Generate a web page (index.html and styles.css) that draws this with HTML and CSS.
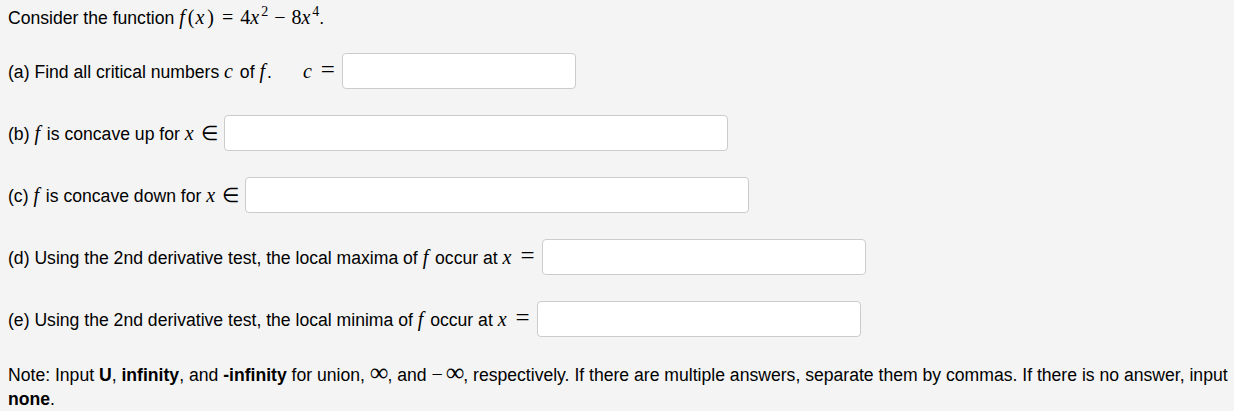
FILE: index.html
```html
<!DOCTYPE html>
<html>
<head>
<meta charset="utf-8">
<link rel="stylesheet" href="styles.css">
</head>
<body>
<div class="page">
  <p class="intro">Consider the function <span class="m"><i>f</i><span class="p">(</span><i>x</i><span class="p">)</span><span class="rel">=</span>4<i>x</i><sup>2</sup><span class="bin">−</span>8<i>x</i><sup>4</sup></span>.</p>

  <div class="row">
    <span>(a) Find all critical numbers <span class="m"><i>c</i></span> of <span class="m"><i>f</i></span>.</span>
    <span class="m lbl-a"><i>c</i><span class="rel rel-eq">=</span></span>
    <input class="ans ans-short" type="text">
  </div>

  <div class="row">
    <span>(b) <span class="m"><i>f</i></span> is concave up for <span class="m"><i>x</i><span class="rel rel-in">∈</span></span></span>
    <input class="ans ans-long" type="text">
  </div>

  <div class="row">
    <span>(c) <span class="m"><i>f</i></span> is concave down for <span class="m"><i>x</i><span class="rel rel-in">∈</span></span></span>
    <input class="ans ans-long" type="text">
  </div>

  <div class="row">
    <span>(d) Using the 2nd derivative test, the local maxima of <span class="m"><i>f</i></span> occur at <span class="m"><i>x</i><span class="rel rel-eq">=</span></span></span>
    <input class="ans ans-mid" type="text">
  </div>

  <div class="row">
    <span>(e) Using the 2nd derivative test, the local minima of <span class="m"><i>f</i></span> occur at <span class="m"><i>x</i><span class="rel rel-eq">=</span></span></span>
    <input class="ans ans-mid" type="text">
  </div>

  <p class="note">Note: Input <b>U</b>, <b>infinity</b>, and <b>-infinity</b> for union, <span class="m inf">∞</span>, and <span class="m"><span class="neg">−</span><span class="inf">∞</span></span>, respectively. If there are multiple answers, separate them by commas. If there is no answer, input <b>none</b>.</p>
</div>
</body>
</html>
```

FILE: styles.css
```css
html, body {
  margin: 0;
  padding: 0;
  background: #f4f4f4;
}
body {
  font-family: "Liberation Sans", Arial, sans-serif;
  font-size: 17.6px;
  color: #000;
}
.page {
  padding: 7px 3px 0 8px;
  display: flex;
  flex-direction: column;
}
.intro {
  margin: 0;
  line-height: 20px;
}
.m {
  font-family: "Liberation Serif", "Times New Roman", serif;
  font-size: 20px;
}
.m i {
  font-style: italic;
  padding-right: 2px;
}
.m sup {
  font-size: 14px;
  vertical-align: 8px;
  line-height: 0;
}
.p {
  padding: 0 1px;
}
.rel {
  margin: 0 7px;
}
.rel-eq {
  font-size: 25px;
  line-height: 0;
  margin: 0 1px 0 7px;
}
.rel-in {
  margin: 0 0 0 5px;
}
.bin {
  margin: 0 6px;
}
.row {
  display: flex;
  align-items: center;
  height: 36px;
  margin-top: 26px;
  white-space: pre;
}
.row:first-of-type {
  margin-top: 25px;
}
.lbl-a {
  margin-left: 31px;
}
.ans {
  box-sizing: border-box;
  height: 36px;
  margin: 0 0 0 6px;
  border: 1px solid #cccccc;
  border-radius: 4px;
  background: #fff;
  padding: 4px 6px;
  font: inherit;
}
.ans-short { width: 234px; }
.ans-long { width: 504px; }
.ans-mid { width: 324px; }
.note {
  margin: 25px 0 0 0;
  line-height: 24px;
}
.inf {
  font-size: 26px;
  line-height: 0;
  letter-spacing: -1px;
}
.neg {
  margin-right: 3px;
}
```
